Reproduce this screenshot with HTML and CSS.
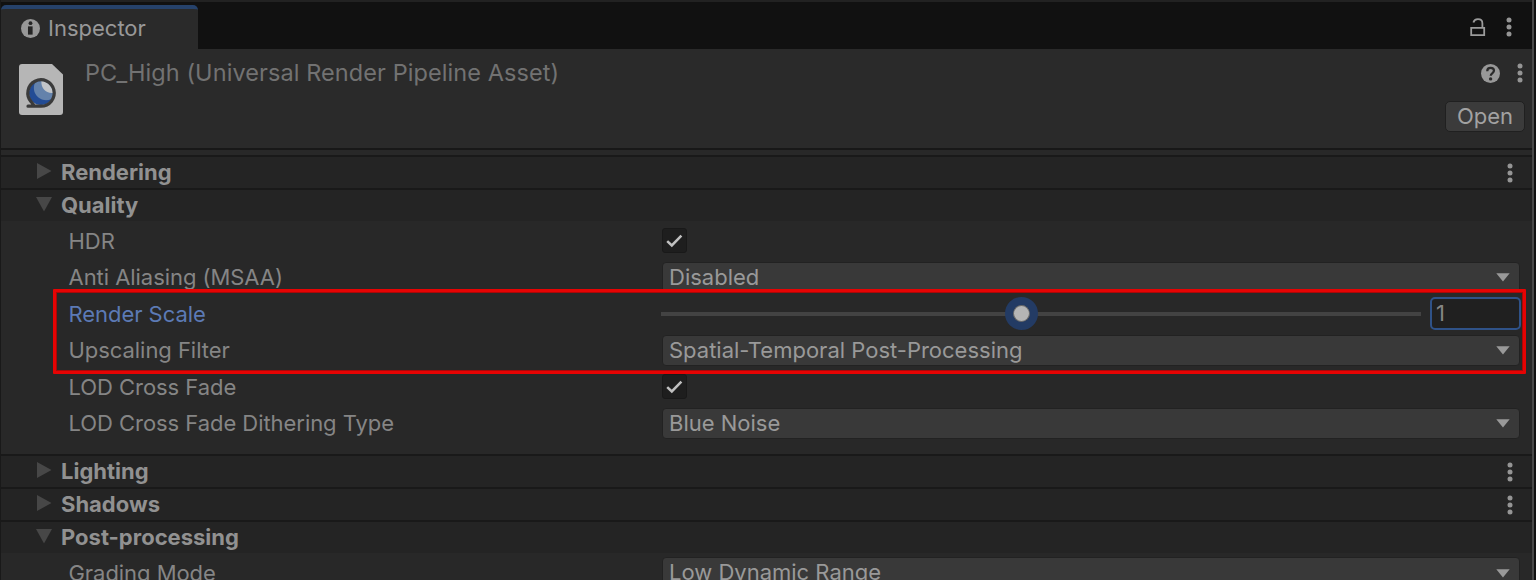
FILE: index.html
```html
<!DOCTYPE html>
<html lang="en">
<head>
    <meta charset="UTF-8">
    <meta name="viewport" content="width=device-width, initial-scale=1.0">
    <title>Inspector</title>
    <link rel="stylesheet" href="styles.css">
</head>
<body>
    <svg class="defs" width="0" height="0">
        <symbol id="dots" viewBox="0 0 6 20">
            <circle cx="3" cy="3" r="2.5"/>
            <circle cx="3" cy="10" r="2.5"/>
            <circle cx="3" cy="17" r="2.5"/>
        </symbol>
        <symbol id="caret" viewBox="0 0 14 9">
            <path d="M0.3 0.3H13.7L7 8.6Z"/>
        </symbol>
        <symbol id="check" viewBox="0 0 24 24">
            <path d="M4.4 12.6L9.2 17.2L19.2 6.9" fill="none" stroke="currentColor" stroke-width="2.6"/>
        </symbol>
    </svg>

    <div class="window">
        <div class="tab-bar">
            <div class="tab">
                <svg class="info-icon" viewBox="0 0 18 18">
                    <circle cx="9" cy="9" r="9" fill="#989898"/>
                    <circle cx="9" cy="4" r="1.8" fill="#252525"/>
                    <path d="M6.6 7H11V14.8H6.6Z" fill="#252525"/>
                </svg>
                <span>Inspector</span>
            </div>
            <div class="tab-tools">
                <svg class="lock-icon" viewBox="0 0 16 19">
                    <path d="M1.2 9.8H14.2V17.2H1.2Z" fill="none" stroke="#9b9b9b" stroke-width="1.8"/>
                    <path d="M3.4 4.4C4 2.2 5.6 1.2 7.9 1.2C10.8 1.2 12.4 2.8 12.4 5.4V9.5" fill="none" stroke="#9b9b9b" stroke-width="1.8"/>
                </svg>
                <svg class="dots"><use href="#dots"/></svg>
            </div>
        </div>

        <div class="asset-header">
            <svg class="asset-icon" viewBox="0 0 44 51">
                <path d="M3 0H33L44 10.5V48Q44 51 41 51H3Q0 51 0 48V3Q0 0 3 0Z" fill="#b6b6b6"/>
                <circle cx="22" cy="29" r="12" fill="#234c95"/>
                <path d="M16 18.6C11.6 29 21 39.6 32.2 35.2A12 12 0 0 0 22 17A12 12 0 0 0 16 18.6Z" fill="#6482ab"/>
                <path d="M22.4 17C21.8 24 27 29.6 33.9 28.9A12 12 0 0 0 22.4 17Z" fill="#c2c5c9"/>
                <path d="M9 42.2H22A13.2 13.2 0 1 0 12 37.6L14.5 40.8" fill="none" stroke="#3b3b3b" stroke-width="3.2" stroke-linecap="round"/>
            </svg>
            <h1>PC_High (Universal Render Pipeline Asset)</h1>
            <div class="asset-tools">
                <div class="asset-icons">
                    <svg class="help-icon" viewBox="0 0 18 18">
                        <circle cx="9" cy="9" r="9" fill="#989898"/>
                        <path d="M5.9 6.8C5.9 4.8 7.2 3.7 9.1 3.7C11 3.7 12.3 4.8 12.3 6.5C12.3 8.6 9.2 8.6 9.2 11.2" fill="none" stroke="#2a2a2a" stroke-width="2.1"/>
                        <circle cx="9.1" cy="14.1" r="1.6" fill="#2a2a2a"/>
                    </svg>
                    <svg class="dots"><use href="#dots"/></svg>
                </div>
                <button class="open-button">Open</button>
            </div>
        </div>

        <div class="section">
            <div class="section-title">
                <svg class="fold" viewBox="0 0 16 18"><path d="M1 1V17L15.5 9Z"/></svg>
                <h2>Rendering</h2>
                <svg class="dots"><use href="#dots"/></svg>
            </div>
        </div>

        <div class="section">
            <div class="section-title">
                <svg class="fold" viewBox="0 0 16 18"><path d="M0 2H16L8 16.5Z"/></svg>
                <h2>Quality</h2>
            </div>
            <div class="section-body">
                <div class="row">
                    <label>HDR</label>
                    <div class="checkbox"><svg><use href="#check"/></svg></div>
                </div>
                <div class="row">
                    <label>Anti Aliasing (MSAA)</label>
                    <div class="dropdown"><span>Disabled</span><svg><use href="#caret"/></svg></div>
                </div>
                <div class="row-group">
                    <div class="row">
                        <label class="active">Render Scale</label>
                        <div class="slider">
                            <div class="thumb"></div>
                        </div>
                        <div class="number">1</div>
                    </div>
                    <div class="row">
                        <label>Upscaling Filter</label>
                        <div class="dropdown"><span>Spatial-Temporal Post-Processing</span><svg><use href="#caret"/></svg></div>
                    </div>
                    <div class="highlight"></div>
                </div>
                <div class="row">
                    <label>LOD Cross Fade</label>
                    <div class="checkbox"><svg><use href="#check"/></svg></div>
                </div>
                <div class="row">
                    <label>LOD Cross Fade Dithering Type</label>
                    <div class="dropdown"><span>Blue Noise</span><svg><use href="#caret"/></svg></div>
                </div>
            </div>
        </div>

        <div class="section">
            <div class="section-title">
                <svg class="fold" viewBox="0 0 16 18"><path d="M1 1V17L15.5 9Z"/></svg>
                <h2>Lighting</h2>
                <svg class="dots"><use href="#dots"/></svg>
            </div>
        </div>

        <div class="section">
            <div class="section-title">
                <svg class="fold" viewBox="0 0 16 18"><path d="M1 1V17L15.5 9Z"/></svg>
                <h2>Shadows</h2>
                <svg class="dots"><use href="#dots"/></svg>
            </div>
        </div>

        <div class="section">
            <div class="section-title">
                <svg class="fold" viewBox="0 0 16 18"><path d="M0 2H16L8 16.5Z"/></svg>
                <h2>Post-processing</h2>
            </div>
            <div class="section-body">
                <div class="row">
                    <label>Grading Mode</label>
                    <div class="dropdown"><span>Low Dynamic Range</span><svg><use href="#caret"/></svg></div>
                </div>
            </div>
        </div>
    </div>
</body>
</html>
```
FILE: styles.css
```css
* {
    box-sizing: border-box;
}
body {
    margin: 0;
    height: 580px;
    overflow: hidden;
    background: #111;
    color: #858585;
    font-family: Inter, "Liberation Sans", sans-serif;
    font-size: 22px;
    line-height: 28px;
}
svg {
    display: block;
    flex: none;
}
.defs {
    position: absolute;
}
.window {
    width: 1534px;
    height: 580px;
    overflow: hidden;
    background: #282828;
    border-left: 1px solid #191919;
    border-right: 2px solid #484848;
}

/* tab bar */
.tab-bar {
    display: flex;
    justify-content: space-between;
    align-items: flex-end;
    height: 49px;
    background: #111;
    border-top: 2px solid #222;
}
.tab {
    display: flex;
    align-items: center;
    gap: 8px;
    width: 197px;
    height: 44px;
    padding: 0 0 2px 20px;
    background: #2a2a2a;
    border-top: 4px solid #26426b;
    border-radius: 5px 5px 0 0;
    color: #989898;
}
.info-icon,
.help-icon {
    width: 19px;
    height: 19px;
}
.tab-tools {
    display: flex;
    align-items: center;
    gap: 20px;
    height: 44px;
    padding-right: 20px;
}
.lock-icon {
    width: 16px;
    height: 19px;
}
.dots {
    width: 6px;
    height: 20px;
    fill: #959595;
}

/* asset header */
.asset-header {
    display: flex;
    align-items: flex-start;
    height: 106px;
    padding: 15px 7px 0 18px;
    background: linear-gradient(#2a2a2a 99px, #181818 99px, #181818 101px, #282828 101px);
}
.asset-icon {
    width: 44px;
    height: 51px;
}
h1 {
    flex: 1;
    margin: -5px 0 0 22px;
    font-size: 23.5px;
    font-weight: 400;
    letter-spacing: 0.08px;
    color: #727272;
}
.asset-tools {
    display: flex;
    flex-direction: column;
    align-items: flex-end;
    gap: 18px;
}
.asset-icons {
    display: flex;
    align-items: center;
    gap: 17px;
    padding-right: 2px;
    margin-top: -1px;
}
.open-button {
    width: 80px;
    height: 31px;
    padding: 0 0 2px;
    background: #3b3b3b;
    border: 1px solid #202020;
    border-radius: 5px;
    color: #a2a2a2;
    font: inherit;
}

/* sections */
.section-title {
    display: flex;
    align-items: center;
    height: 33px;
    padding: 2px 19px 0 35px;
    background: #242424;
    border-top: 2px solid #191919;
}
.section-title .dots {
    margin-top: -1px;
}
.fold {
    width: 16px;
    height: 18px;
    margin-top: -5px;
    fill: #474747;
}
h2 {
    flex: 1;
    margin: -3px 0 0 9px;
    font-size: 22px;
    font-weight: 700;
    color: #919191;
}
.section-body {
    padding: 1.5px 0 12.5px;
}
.row {
    display: flex;
    align-items: center;
    height: 36.5px;
    padding: 0 12px 0 67.5px;
}
label {
    flex: none;
    width: 593.5px;
    letter-spacing: -0.05px;
}
label.active {
    color: #5c7ab5;
}
.checkbox {
    width: 25px;
    height: 25px;
    background: #1e1e1e;
    border: 1px solid #191919;
    border-radius: 3px;
    color: #c0c0c0;
}
.checkbox svg {
    width: 23px;
    height: 23px;
}
.dropdown {
    display: flex;
    flex: 1;
    align-items: center;
    justify-content: space-between;
    height: 31px;
    padding: 0 9px 1px 6px;
    background: #393939;
    border: 1px solid #222;
    border-radius: 4px;
    color: #999;
}
.dropdown svg {
    width: 14px;
    height: 9px;
    margin-top: 2px;
    fill: #999;
}
.slider {
    display: flex;
    align-items: center;
    flex: 1;
    height: 4px;
    margin: 0 9px 0 -1px;
    padding-left: 344px;
    background: #434343;
}
.thumb {
    flex: none;
    width: 33px;
    height: 33px;
    border: 8px solid #233b64;
    border-radius: 50%;
    background: #b5b5b5 content-box;
    box-shadow: inset 0 0 0 1px #666;
}
.number {
    width: 91px;
    height: 33px;
    margin-right: -1px;
    padding: 0 4px;
    background: #202020;
    border: 2px solid #2f5288;
    border-radius: 5px;
}

/* frame drawn over the scale and filter rows */
.row-group {
    position: relative;
}
.highlight {
    position: absolute;
    top: -6.5px;
    left: 52px;
    right: 6px;
    height: 85px;
    border: 3px solid #e60303;
    border-radius: 1px;
    box-shadow: inset 0 0 0 1px #a80808;
}
```
